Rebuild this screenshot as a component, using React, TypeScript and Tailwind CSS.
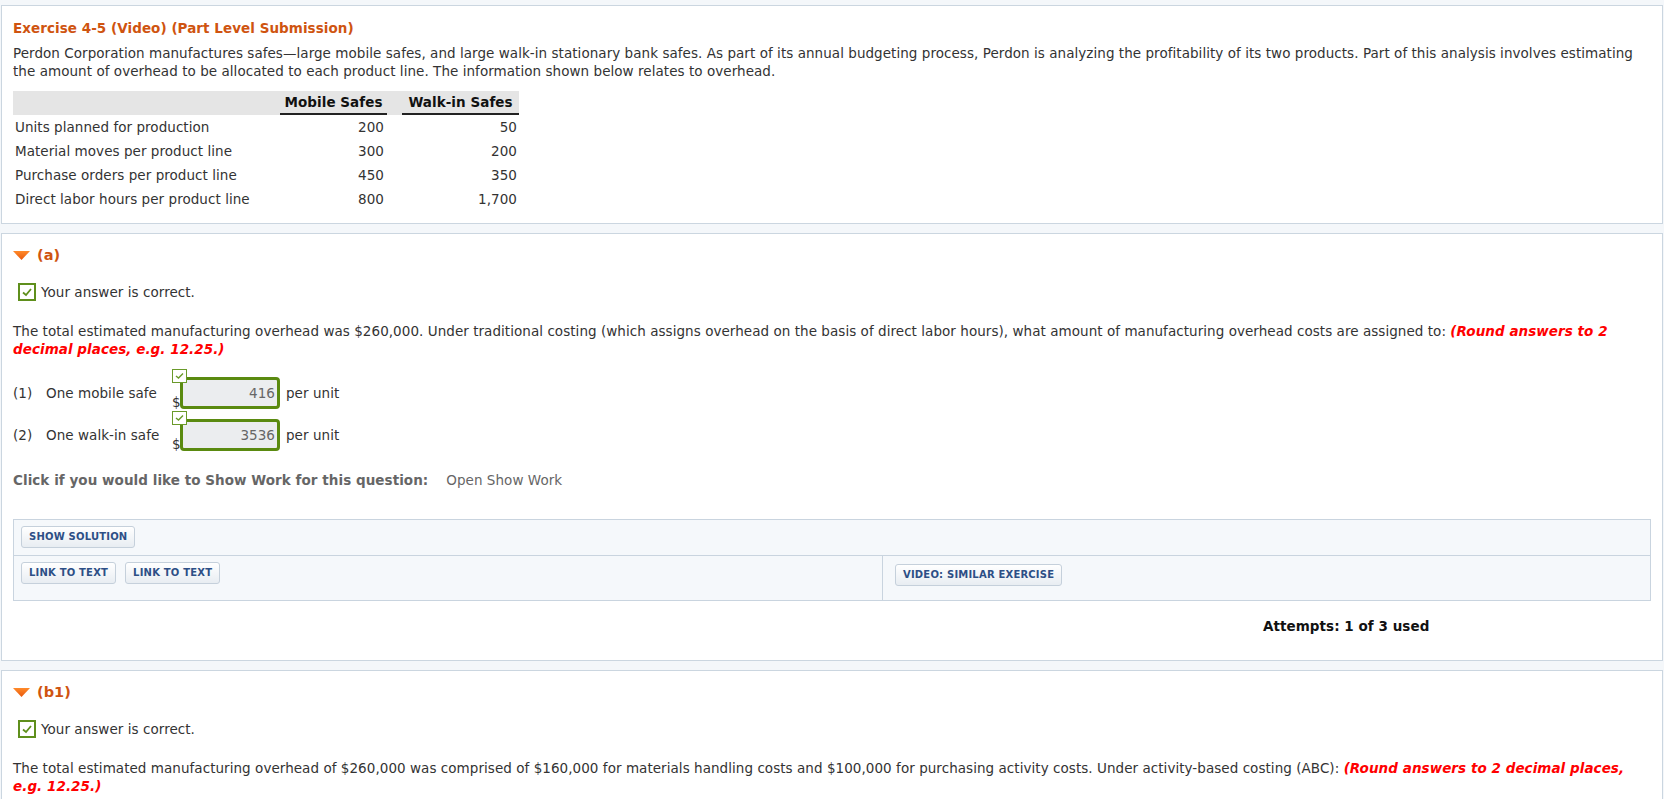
import React from 'react';

const rows = [
  { label: 'Units planned for production', mobile: '200', walk: '50' },
  { label: 'Material moves per product line', mobile: '300', walk: '200' },
  { label: 'Purchase orders per product line', mobile: '450', walk: '350' },
  { label: 'Direct labor hours per product line', mobile: '800', walk: '1,700' },
];

function Check({ size = 18 }: { size?: number }) {
  return (
    <svg width={size} height={size} viewBox="0 0 18 18" className="block shrink-0">
      <rect x="1" y="1" width="16" height="16" fill="#fff" stroke="#5f8f1c" strokeWidth="2" />
      <polyline points="5,9.5 8,12 13,6" fill="none" stroke="#5f8f1c" strokeWidth="1.8" />
    </svg>
  );
}

function SmallCheck() {
  return (
    <svg width="15" height="14" viewBox="0 0 15 14" className="block">
      <rect x="0.5" y="0.5" width="14" height="13" fill="#fff" stroke="#6a9a2a" strokeWidth="1" />
      <polyline points="4,7 6.5,9 11,4.5" fill="none" stroke="#6a9a2a" strokeWidth="1.4" />
    </svg>
  );
}

function Triangle() {
  return (
    <svg width="17" height="9" viewBox="0 0 17 9" className="block">
      <defs>
        <linearGradient id="tri" x1="0" y1="0" x2="0" y2="1">
          <stop offset="0" stopColor="#ff8a2a" />
          <stop offset="1" stopColor="#e8580c" />
        </linearGradient>
      </defs>
      <polygon points="0,0 17,0 8.5,9" fill="url(#tri)" />
    </svg>
  );
}

function Btn({ children }: { children: React.ReactNode }) {
  return (
    <span className="inline-flex h-[22px] items-center rounded-[3px] border border-[#c5d0db] bg-gradient-to-b from-white to-[#e8edf2] px-[7px] text-[10px] font-bold tracking-[0.2px] text-[#2d4f86]">
      {children}
    </span>
  );
}

function PartHeader({ label }: { label: string }) {
  return (
    <div className="flex h-[18px] items-center gap-[7px]">
      <Triangle />
      <span className="text-[14.5px] font-bold text-[#cf5410]">{label}</span>
    </div>
  );
}

function Correct() {
  return (
    <div className="mt-[19px] flex h-[18px] items-center gap-[5px] pl-[5px]">
      <Check />
      <span>Your answer is correct.</span>
    </div>
  );
}

function AnswerRow({ num, label, value, top }: { num: string; label: string; value: string; top: string }) {
  return (
    <div className={`flex h-[32px] items-center ${top}`}>
      <span className="w-[33px]">{num}</span>
      <span className="w-[126px]">{label}</span>
      <span className="relative flex h-[32px] items-end">
        <span className="absolute left-0 top-[-8px]">
          <SmallCheck />
        </span>
        <span className="w-[8px] leading-[13px]">$</span>
        <span className="flex h-[32px] w-[100px] items-center justify-end rounded-[4px] border-[3px] border-[#5a8a10] bg-[#ebedef] pr-[2px] text-[#666]">
          {value}
        </span>
      </span>
      <span className="ml-[6px]">per unit</span>
    </div>
  );
}

export default function App() {
  return (
    <div className="min-h-screen bg-[#f4f7fa] px-px pt-[5px] text-[13.5px] leading-[18px] tracking-[0.05px] text-[#333] font-['DejaVu_Sans','Verdana',sans-serif]">
      {/* intro */}
      <div className="border border-[#cbd6e0] bg-white px-[11px] pb-[12px] pt-[13px]">
        <div className="font-bold text-[#cf5410]">Exercise 4-5 (Video) (Part Level Submission)</div>
        <div className="mt-[7px] whitespace-nowrap">
          <div>
            Perdon Corporation manufactures safes—large mobile safes, and large walk-in stationary bank safes. As part of its annual budgeting process, Perdon is analyzing the profitability of its two products. Part of this analysis involves estimating
          </div>
          <div>the amount of overhead to be allocated to each product line. The information shown below relates to overhead.</div>
        </div>
        <div className="mt-[11px] w-[506px]">
          <div className="flex h-[24px] bg-[#e5e5e5]">
            <div className="w-[267px]" />
            <div className="flex w-[107px] items-center justify-center border-b-2 border-[#222] font-bold text-[#111]">Mobile Safes</div>
            <div className="w-[15px]" />
            <div className="flex w-[117px] items-center justify-center border-b-2 border-[#222] font-bold text-[#111]">Walk-in Safes</div>
          </div>
          {rows.map((r) => (
            <div key={r.label} className="flex h-[24px] items-center">
              <div className="w-[267px] pl-[2px]">{r.label}</div>
              <div className="w-[107px] pr-[3px] text-right">{r.mobile}</div>
              <div className="w-[15px]" />
              <div className="w-[117px] pr-[2px] text-right">{r.walk}</div>
            </div>
          ))}
        </div>
      </div>

      {/* part a */}
      <div className="mt-[9px] border border-[#cbd6e0] bg-white px-[11px] pb-[25px] pt-[12px]">
        <PartHeader label="(a)" />
        <Correct />
        <div className="mt-[21px] whitespace-nowrap">
          <div>
            The total estimated manufacturing overhead was $260,000. Under traditional costing (which assigns overhead on the basis of direct labor hours), what amount of manufacturing overhead costs are assigned to:{' '}
            <span className="font-bold italic text-[#f00]">(Round answers to 2</span>
          </div>
          <div className="font-bold italic text-[#f00]">decimal places, e.g. 12.25.)</div>
        </div>
        <AnswerRow num="(1)" label="One mobile safe" value="416" top="mt-[19px]" />
        <AnswerRow num="(2)" label="One walk-in safe" value="3536" top="mt-[10px]" />
        <div className="mt-[20px] flex items-center">
          <span className="font-bold text-[#666]">Click if you would like to Show Work for this question:</span>
          <span className="ml-[18px] text-[#666]">Open Show Work</span>
        </div>
        <div className="mt-[30px] border border-[#c9d4df] bg-[#f5f8fb]">
          <div className="h-[36px] border-b border-[#c9d4df] px-[7px] pt-[6px]">
            <Btn>SHOW SOLUTION</Btn>
          </div>
          <div className="flex h-[44px]">
            <div className="flex w-[869px] gap-[9px] border-r border-[#c9d4df] px-[7px] pt-[6px]">
              <Btn>LINK TO TEXT</Btn>
              <Btn>LINK TO TEXT</Btn>
            </div>
            <div className="px-[12px] pt-[8px]">
              <Btn>VIDEO: SIMILAR EXERCISE</Btn>
            </div>
          </div>
        </div>
        <div className="ml-[1250px] mt-[16px] font-bold text-[#111]">Attempts: 1 of 3 used</div>
      </div>

      {/* part b1 */}
      <div className="mt-[9px] border border-[#cbd6e0] bg-white px-[11px] pb-[40px] pt-[12px]">
        <PartHeader label="(b1)" />
        <Correct />
        <div className="mt-[21px] whitespace-nowrap">
          <div>
            The total estimated manufacturing overhead of $260,000 was comprised of $160,000 for materials handling costs and $100,000 for purchasing activity costs. Under activity-based costing (ABC):{' '}
            <span className="font-bold italic text-[#f00]">(Round answers to 2 decimal places,</span>
          </div>
          <div className="font-bold italic text-[#f00]">e.g. 12.25.)</div>
        </div>
      </div>
    </div>
  );
}
